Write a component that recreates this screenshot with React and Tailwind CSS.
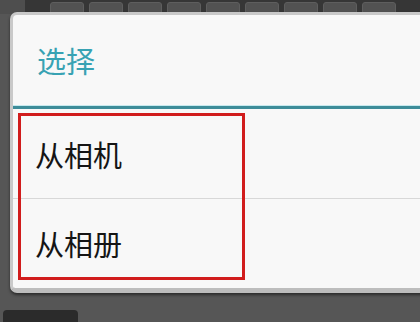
export default function App() {
  const keys = [0, 1, 2, 3, 4, 5, 6, 7, 8];
  return (
    <div
      className="relative w-[420px] h-[322px] overflow-hidden bg-[#565656]"
      style={{ fontFamily: '"Noto Sans CJK SC", "Noto Sans", sans-serif' }}
    >
      {/* background page */}
      <div className="flex flex-col h-full">
        <div className="flex h-[14px]">
          <div className="w-[25px] bg-[#4e4e4e]" />
          <div className="flex-1 flex gap-[5px] bg-[#363636] pl-[25px] pt-[2px]">
            {keys.map((k) => (
              <div key={k} className="w-[34px] h-[14px] rounded-[3px] bg-[#525252] border border-[#5e5e5e]" />
            ))}
          </div>
        </div>
        <div className="flex-1" />
        <div className="flex h-[12px] pl-[3px]">
          <div className="w-[75px] h-full rounded-t-[4px] bg-[#2b2b2b]" />
        </div>
      </div>

      {/* dialog */}
      <div className="absolute left-[10px] top-[12px] w-[430px] h-[281px] rounded-[7px] border-[3px] border-[#c9c9c9] border-b-[5px] border-b-[#bdbdbd] bg-[#f8f8f8] shadow-[0_2px_3px_rgba(0,0,0,0.5)] flex flex-col overflow-hidden">
        <div className="h-[90px] flex items-center pl-[24px] pt-[1px]">
          <span className="text-[29px] leading-none text-[#38a2b3]">选择</span>
        </div>
        <div className="h-[1px] bg-[#c6e9ee]" />
        <div className="h-[3px] bg-[#3d8c99]" />
        <div className="h-[89px] flex items-center pl-[22px] pt-[1px]">
          <span className="text-[29px] leading-none text-[#151515]">从相机</span>
        </div>
        <div className="h-[1px] bg-[#d8d8d8]" />
        <div className="flex-1 flex items-center pl-[22px]">
          <span className="text-[29px] leading-none text-[#151515]">从相册</span>
        </div>
      </div>

      {/* red annotation box */}
      <div className="absolute left-[18px] top-[113px] w-[227px] h-[167px] border-[3px] border-[#d11c1c]" />
    </div>
  );
}
